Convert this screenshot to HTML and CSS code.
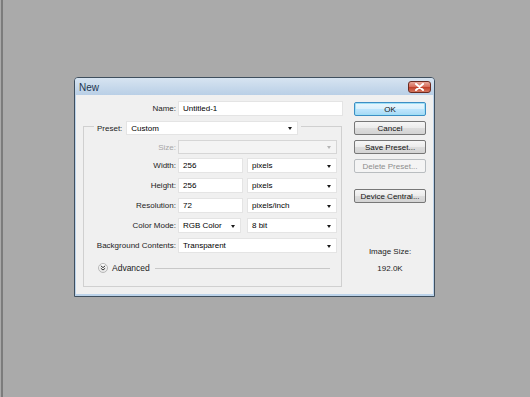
FILE: index.html
```html
<!DOCTYPE html>
<html>
<head>
<meta charset="utf-8">
<link rel="stylesheet" href="styles.css">
</head>
<body>
<div class="dialog">
  <div class="titlebar">
    <span class="title">New</span>
    <div class="close"><svg width="9" height="8" viewBox="0 0 9 8"><path d="M1 1 L8 7 M8 1 L1 7" stroke="#fff" stroke-width="2" stroke-linecap="round"/></svg></div>
  </div>
  <div class="body">
    <div class="left">
      <div class="row name-row">
        <span class="label lbl-name">Name:</span>
        <div class="field f-name">Untitled-1</div>
      </div>
      <div class="group">
        <div class="legend">
          <span class="label lbl-preset">Preset:</span>
          <div class="field sel f-preset">Custom<i class="arr"></i></div>
        </div>
        <div class="row r-size">
          <span class="label dis">Size:</span>
          <div class="field sel disabled f-wide"><i class="arr"></i></div>
        </div>
        <div class="row r-first">
          <span class="label">Width:</span>
          <div class="field f-num">256</div>
          <div class="field sel f-unit">pixels<i class="arr"></i></div>
        </div>
        <div class="row">
          <span class="label">Height:</span>
          <div class="field f-num">256</div>
          <div class="field sel f-unit">pixels<i class="arr"></i></div>
        </div>
        <div class="row">
          <span class="label">Resolution:</span>
          <div class="field f-num">72</div>
          <div class="field sel f-unit">pixels/inch<i class="arr"></i></div>
        </div>
        <div class="row">
          <span class="label">Color Mode:</span>
          <div class="field sel f-mode">RGB Color<i class="arr"></i></div>
          <div class="field sel f-unit">8 bit<i class="arr"></i></div>
        </div>
        <div class="row">
          <span class="label">Background Contents:</span>
          <div class="field sel f-wide">Transparent<i class="arr"></i></div>
        </div>
        <div class="adv">
          <span class="adv-btn"><svg width="6" height="6" viewBox="0 0 6 6"><path d="M0.8 0.8 L3 2.6 L5.2 0.8 M0.8 3.2 L3 5 L5.2 3.2" stroke="#333" stroke-width="1" fill="none"/></svg></span>
          <span class="adv-text">Advanced</span>
          <span class="adv-line"></span>
        </div>
      </div>
    </div>
    <div class="right">
      <div class="btn ok">OK</div>
      <div class="btn">Cancel</div>
      <div class="btn">Save Preset...</div>
      <div class="btn disabled-btn">Delete Preset...</div>
      <div class="btn dc">Device Central...</div>
      <div class="info">Image Size:</div>
      <div class="info size">192.0K</div>
    </div>
  </div>
</div>
</body>
</html>
```
FILE: styles.css
```css
html, body {
  margin: 0;
  padding: 0;
}
body {
  width: 530px;
  height: 397px;
  position: relative;
  overflow: hidden;
  background: linear-gradient(to right, #a9a9a9 0 1px, #7c7c7c 1px 3px, #aaaaaa 3px);
  font-family: "Liberation Sans", Arial, sans-serif;
  font-size: 8px;
  color: #1c1c1c;
}
.dialog {
  position: absolute;
  left: 74px;
  top: 77px;
  width: 361px;
  height: 220px;
  box-sizing: border-box;
  border: 1px solid #3f4f5e;
  border-radius: 4px 4px 0 0;
  background: #bcd3ea;
  display: flex;
  flex-direction: column;
}
.titlebar {
  height: 17px;
  flex: none;
  display: flex;
  align-items: center;
  background: linear-gradient(to bottom, #d7e4f1, #b9cfe6);
  border-radius: 3px 3px 0 0;
  position: relative;
}
.title {
  margin-left: 4px;
  font-size: 10px;
  color: #1d3650;
  margin-top: 1px;
}
.close {
  position: absolute;
  right: 3px;
  top: 3px;
  width: 23px;
  height: 12px;
  box-sizing: border-box;
  border: 1px solid #6b2a20;
  border-radius: 3px;
  background: linear-gradient(to bottom, #e9a79a 0%, #d8705e 45%, #c2412c 55%, #d4775f 100%);
  display: flex;
  align-items: center;
  justify-content: center;
}
.body {
  flex: 1;
  margin: 0 1px 2px 1px;
  background: #f0f0f0;
  display: flex;
}
.left {
  width: 266px;
  flex: none;
}
.row {
  display: flex;
  align-items: center;
  height: 15px;
  margin-top: 5px;
}
.label {
  width: 92px;
  margin-right: 2px;
  text-align: right;
  white-space: nowrap;
  flex: none;
}
.label.dis {
  color: #a6a6a6;
}
.name-row {
  margin-top: 6px;
}
.lbl-name {
  width: 100px;
}
.field {
  height: 100%;
  box-sizing: border-box;
  background: #ffffff;
  border: 1px solid #e4e4e4;
  display: flex;
  align-items: center;
  padding-left: 4px;
  color: #000;
  position: relative;
  flex: none;
  white-space: nowrap;
}
.f-name { width: 165px; }
.f-num { width: 65px; }
.f-unit { width: 90px; margin-left: 4px; }
.f-mode { width: 63px; margin-left: 0; }
.f-mode + .f-unit { margin-left: 6px; }
.f-wide { width: 159px; }
.f-preset { width: 172px; }
.field.disabled {
  background: #f4f4f4;
  border-color: #d6d6d6;
}
.arr {
  position: absolute;
  right: 5px;
  top: 50%;
  margin-top: -1px;
  width: 0;
  height: 0;
  border-left: 2.5px solid transparent;
  border-right: 2.5px solid transparent;
  border-top: 3px solid #1a1a1a;
}
.disabled .arr {
  border-top-color: #b5b5b5;
}
.group {
  margin-top: 10px;
  margin-left: 7px;
  width: 259px;
  height: 161px;
  box-sizing: border-box;
  border: 1px solid #d0d0d0;
}
.legend {
  display: flex;
  align-items: center;
  height: 14px;
  margin-top: -6px;
  margin-left: 10px;
  width: max-content;
  background: #f0f0f0;
  padding: 0 3px 0 3px;
}
.lbl-preset {
  width: auto;
  margin-right: 4px;
}
.r-size {
  height: 14px;
  margin-top: 5px;
}
.r-first {
  margin-top: 4px;
}
.adv {
  display: flex;
  align-items: center;
  height: 12px;
  margin-top: 9px;
  margin-left: 14px;
  margin-right: 11px;
}
.adv-btn {
  width: 10px;
  height: 10px;
  box-sizing: border-box;
  border: 1px solid #b8b8b8;
  border-radius: 50%;
  background: linear-gradient(#ffffff, #e6e6e6);
  display: flex;
  align-items: center;
  justify-content: center;
  flex: none;
}
.adv-text {
  margin-left: 4px;
  font-size: 8.5px;
}
.adv-line {
  flex: 1;
  height: 1px;
  background: #c8c8c8;
  margin-left: 5px;
}
.right {
  margin-left: 12px;
  width: 72px;
  padding-top: 7px;
  display: flex;
  flex-direction: column;
}
.btn {
  height: 14px;
  box-sizing: border-box;
  border: 1px solid #777777;
  border-radius: 2px;
  background: linear-gradient(to bottom, #f6f6f6 0%, #ebebeb 50%, #dddddd 51%, #d3d3d3 100%);
  display: flex;
  align-items: center;
  justify-content: center;
  margin-bottom: 5px;
  color: #111;
  white-space: nowrap;
}
.btn.ok {
  border-color: #3d8ec4;
  background: linear-gradient(to bottom, #eaf6fd 0%, #d9f0fc 50%, #bee6fd 51%, #a7d9f5 100%);
  box-shadow: inset 0 0 0 1px #9fe0f6;
}
.btn.disabled-btn {
  border-color: #b9bdc0;
  background: #f4f4f4;
  color: #8d8d8d;
}
.btn.dc {
  margin-top: 11px;
}
.info {
  text-align: center;
  margin-top: 39px;
  line-height: 10px;
}
.info.size {
  margin-top: 7px;
}
```
